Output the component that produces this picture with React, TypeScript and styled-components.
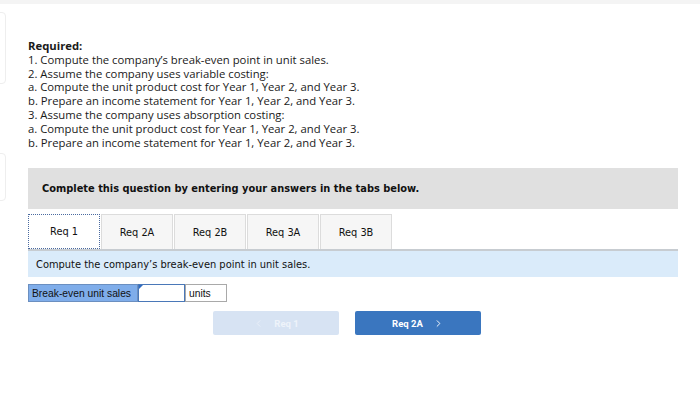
import styled, { createGlobalStyle } from 'styled-components';
import { ChevronLeft, ChevronRight } from 'lucide-react';

const GlobalStyle = createGlobalStyle`
  html, body {
    margin: 0;
    padding: 0;
    background: #ffffff;
  }
`;

const tabs = ['Req 1', 'Req 2A', 'Req 2B', 'Req 3A', 'Req 3B'];

const required = [
  '1. Compute the company’s break-even point in unit sales.',
  '2. Assume the company uses variable costing:',
  'a. Compute the unit product cost for Year 1, Year 2, and Year 3.',
  'b. Prepare an income statement for Year 1, Year 2, and Year 3.',
  '3. Assume the company uses absorption costing:',
  'a. Compute the unit product cost for Year 1, Year 2, and Year 3.',
  'b. Prepare an income statement for Year 1, Year 2, and Year 3.',
];

function App() {
  return (
    <Page>
      <GlobalStyle />
      <TopStrip />
      <SideCard top={12} height={70} />
      <SideCard top={153} height={46} />
      <Content>
        <Required>
          <Heading>Required:</Heading>
          {required.map((line) => (
            <Line key={line}>{line}</Line>
          ))}
        </Required>

        <Banner>Complete this question by entering your answers in the tabs below.</Banner>

        <TabRow>
          {tabs.map((t, i) => (
            <Tab key={t} active={i === 0}>{t}</Tab>
          ))}
        </TabRow>

        <Prompt>Compute the company’s break-even point in unit sales.</Prompt>

        <AnswerRow>
          <AnswerLabel>Break-even unit sales</AnswerLabel>
          <AnswerInput />
          <Unit>units</Unit>
        </AnswerRow>

        <NavRow>
          <NavButton disabled>
            <ChevronLeft size={11} strokeWidth={1.6} /> Req 1
          </NavButton>
          <NavButton primary>
            Req 2A <ChevronRight size={11} strokeWidth={2} />
          </NavButton>
        </NavRow>
      </Content>
    </Page>
  );
}

const Page = styled.div`
  position: relative;
  width: 700px;
  height: 408px;
  overflow: hidden;
  background: #ffffff;
`;

const TopStrip = styled.div`
  height: 4px;
  background: #f4f4f4;
`;

const SideCard = styled.div<{ top: number; height: number }>`
  position: absolute;
  left: -10px;
  top: ${(p) => p.top}px;
  width: 14px;
  height: ${(p) => p.height}px;
  border: 1px solid #eeeeee;
  border-radius: 4px;
`;

const Content = styled.div`
  padding: 35px 22px 0 28px;
  display: flex;
  flex-direction: column;
`;

const Required = styled.div`
  font-family: "Open Sans", "Liberation Sans", sans-serif;
  font-size: 11.3px;
  line-height: 13.8px;
  color: #1a1a1a;
  margin-bottom: 19px;
`;

const Heading = styled.div`
  font-weight: 700;
`;

const Line = styled.div``;

const Banner = styled.div`
  background: #e0e0e0;
  height: 41px;
  display: flex;
  align-items: center;
  padding-left: 14px;
  font-family: "DejaVu Sans", Verdana, sans-serif;
  font-weight: 700;
  font-size: 9.85px;
  color: #111111;
`;

const TabRow = styled.div`
  margin-top: 5px;
  display: flex;
  gap: 1px;
  border-bottom: 2px solid #c7ccd1;
  height: 35px;
`;

const Tab = styled.div<{ active?: boolean }>`
  width: 72px;
  box-sizing: border-box;
  display: flex;
  align-items: center;
  justify-content: center;
  font-family: "DejaVu Sans", Verdana, sans-serif;
  font-size: 9.8px;
  color: #111111;
  background: ${(p) => (p.active ? '#ffffff' : '#f6f6f6')};
  border: ${(p) => (p.active ? '1px dotted #4a6aa0' : '1px solid #dcdcdc')};
  border-bottom: ${(p) => (p.active ? '1px dotted #4a6aa0' : 'none')};
`;

const Prompt = styled.div`
  background: #daebfa;
  height: 26px;
  display: flex;
  align-items: center;
  padding-left: 8px;
  font-family: "DejaVu Sans", Verdana, sans-serif;
  font-size: 9.9px;
  color: #111111;
`;

const AnswerRow = styled.div`
  margin-top: 7px;
  display: flex;
  height: 18px;
`;

const AnswerLabel = styled.div`
  width: 110px;
  box-sizing: border-box;
  background: #7fadea;
  border: 1px solid #6b8fc0;
  display: flex;
  align-items: center;
  padding-left: 3px;
  font-family: "Liberation Sans", Arial, sans-serif;
  font-size: 10.3px;
  color: #111111;
`;

const AnswerInput = styled.div`
  position: relative;
  width: 47px;
  box-sizing: border-box;
  background: #ffffff;
  border: 1px solid #4a78b8;
  &::before {
    content: '';
    position: absolute;
    left: 0;
    top: 0;
    border-top: 4px solid #2f6bc0;
    border-right: 4px solid transparent;
  }
`;

const Unit = styled.div`
  width: 42px;
  box-sizing: border-box;
  background: #ffffff;
  border: 1px solid #a9a9a9;
  display: flex;
  align-items: center;
  padding-left: 3px;
  font-family: "Liberation Sans", Arial, sans-serif;
  font-size: 10.3px;
  color: #111111;
`;

const NavRow = styled.div`
  margin-top: 9px;
  display: flex;
  gap: 16px;
  padding-left: 185px;
`;

const NavButton = styled.div<{ primary?: boolean; disabled?: boolean }>`
  width: 126px;
  height: 24px;
  border-radius: 2px;
  display: flex;
  align-items: center;
  justify-content: center;
  gap: 10px;
  font-family: Roboto, "Liberation Sans", sans-serif;
  font-weight: 700;
  font-size: 9.5px;
  color: ${(p) => (p.primary ? '#ffffff' : '#eef3fa')};
  background: ${(p) => (p.primary ? '#3a76bf' : '#d7e3f3')};
`;

export default App;
